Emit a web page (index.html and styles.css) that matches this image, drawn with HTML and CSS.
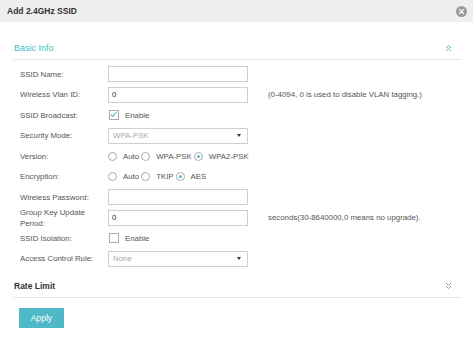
FILE: index.html
```html
<!DOCTYPE html>
<html>
<head>
<meta charset="utf-8">
<link rel="stylesheet" href="styles.css">
</head>
<body>
<div class="dialog">
  <div class="header">
    <span class="title">Add 2.4GHz SSID</span>
    <svg class="close" width="11" height="11" viewBox="0 0 11 11"><circle cx="5.5" cy="5.5" r="5.5" fill="#9b9b9b"/><path d="M3.6 3.6 L7.4 7.4 M7.4 3.6 L3.6 7.4" stroke="#fff" stroke-width="1.3" stroke-linecap="round"/></svg>
  </div>

  <div class="section-head">
    <span class="section-title teal">Basic Info</span>
    <svg class="chev" width="7" height="8" viewBox="0 0 7 8"><path d="M1 4 L3.5 1.5 L6 4 M1 7 L3.5 4.5 L6 7" fill="none" stroke="#4cbfcd" stroke-width="1"/></svg>
  </div>

  <div class="form">
    <div class="label">SSID Name:</div>
    <div class="field"><div class="input"></div></div>
    <div class="hint"></div>

    <div class="label">Wireless Vlan ID:</div>
    <div class="field"><div class="input">0</div></div>
    <div class="hint">(0-4094, 0 is used to disable VLAN tagging.)</div>

    <div class="label">SSID Broadcast:</div>
    <div class="field"><span class="check on"><svg width="9" height="9" viewBox="0 0 9 9"><path d="M1.8 4.6 L3.7 6.5 L7.4 2" fill="none" stroke="#4cbfcd" stroke-width="1.1"/></svg></span><span class="opt">Enable</span></div>
    <div class="hint"></div>

    <div class="label">Security Mode:</div>
    <div class="field"><div class="select"><span>WPA-PSK</span><span class="caret"></span></div></div>
    <div class="hint"></div>

    <div class="label">Version:</div>
    <div class="field radios"><span class="radio"></span><span class="ropt">Auto</span><span class="radio"></span><span class="ropt">WPA-PSK</span><span class="radio on"></span><span class="ropt">WPA2-PSK</span></div>
    <div class="hint"></div>

    <div class="label">Encryption:</div>
    <div class="field radios"><span class="radio"></span><span class="ropt">Auto</span><span class="radio"></span><span class="ropt">TKIP</span><span class="radio on"></span><span class="ropt">AES</span></div>
    <div class="hint"></div>

    <div class="label">Wireless Password:</div>
    <div class="field"><div class="input"></div></div>
    <div class="hint"></div>

    <div class="label two">Group Key Update Period:</div>
    <div class="field"><div class="input">0</div></div>
    <div class="hint">seconds(30-8640000,0 means no upgrade).</div>

    <div class="label">SSID Isolation:</div>
    <div class="field"><span class="check"></span><span class="opt">Enable</span></div>
    <div class="hint"></div>

    <div class="label">Access Control Rule:</div>
    <div class="field"><div class="select"><span>None</span><span class="caret"></span></div></div>
    <div class="hint"></div>
  </div>

  <div class="section-head rate">
    <span class="section-title bold">Rate Limit</span>
    <svg class="chev" width="7" height="8" viewBox="0 0 7 8"><path d="M1 1 L3.5 3.5 L6 1 M1 4 L3.5 6.5 L6 4" fill="none" stroke="#9a9a9a" stroke-width="1"/></svg>
  </div>

  <div class="actions">
    <button class="apply">Apply</button>
  </div>
</div>
</body>
</html>
```
FILE: styles.css
```css
html, body {
  margin: 0;
  padding: 0;
  background: #fff;
}
body {
  font-family: "Liberation Sans", Arial, sans-serif;
  font-size: 7.85px;
  color: #555;
  width: 474px;
  height: 340px;
  overflow: hidden;
}
.dialog {
  width: 473px;
}
.header {
  height: 22px;
  background: #efefef;
  display: flex;
  align-items: center;
  justify-content: space-between;
  padding: 0 6px 0 7px;
  box-sizing: border-box;
}
.title {
  font-weight: bold;
  font-size: 8.5px;
  color: #333;
}
.close {
  display: block;
}
.section-head {
  margin: 15px 11px 0 13px;
  height: 22px;
  border-bottom: 1px solid #e6e6e6;
  display: flex;
  align-items: center;
  justify-content: space-between;
  padding: 0 10px 0 1px;
}
.section-head.rate {
  margin-top: 8.5px;
}
.section-title {
  font-size: 9px;
}
.teal {
  color: #46bdcb;
}
.bold {
  font-weight: bold;
  font-size: 8.5px;
  color: #333;
}
.chev {
  display: block;
}
.form {
  padding: 6px 0 0 20px;
  display: grid;
  grid-template-columns: 88px 140px auto;
  grid-auto-rows: 16px;
  row-gap: 4.5px;
  align-items: center;
}
.label {
  line-height: 11px;
  color: #555;
}
.field {
  display: flex;
  align-items: center;
  height: 16px;
  white-space: nowrap;
}
.hint {
  padding-left: 20px;
  white-space: nowrap;
  color: #555;
}
.input {
  width: 140px;
  height: 16px;
  box-sizing: border-box;
  border: 1px solid #cfcfcf;
  padding-left: 3px;
  line-height: 14px;
  color: #333;
}
.select {
  width: 140px;
  height: 16px;
  box-sizing: border-box;
  border: 1px solid #cfcfcf;
  padding: 0 6px 0 4px;
  display: flex;
  align-items: center;
  justify-content: space-between;
  color: #aaa;
}
.caret {
  width: 0;
  height: 0;
  border-left: 2.5px solid transparent;
  border-right: 2.5px solid transparent;
  border-top: 3.5px solid #333;
}
.check {
  width: 8px;
  height: 8px;
  border: 1px solid #aaa;
  margin-left: 1px;
  position: relative;
  flex: none;
}
.check svg {
  position: absolute;
  left: -1px;
  top: -1px;
}
.opt {
  margin-left: 6px;
  color: #555;
}
.radio {
  width: 7px;
  height: 7px;
  border: 1px solid #aaa;
  border-radius: 50%;
  flex: none;
  position: relative;
}
.radio.on::after {
  content: "";
  position: absolute;
  left: 2px;
  top: 2px;
  width: 3px;
  height: 3px;
  border-radius: 50%;
  background: #4cbfcd;
}
.ropt {
  flex: none;
  margin: 0 2px 0 6px;
  color: #555;
}
.actions {
  padding: 10px 0 0 19px;
}
.apply {
  width: 45px;
  height: 20px;
  border: none;
  background: #4eb8c7;
  color: #fff;
  font-family: "Liberation Sans", Arial, sans-serif;
  font-size: 8.5px;
  padding: 0;
}
```
